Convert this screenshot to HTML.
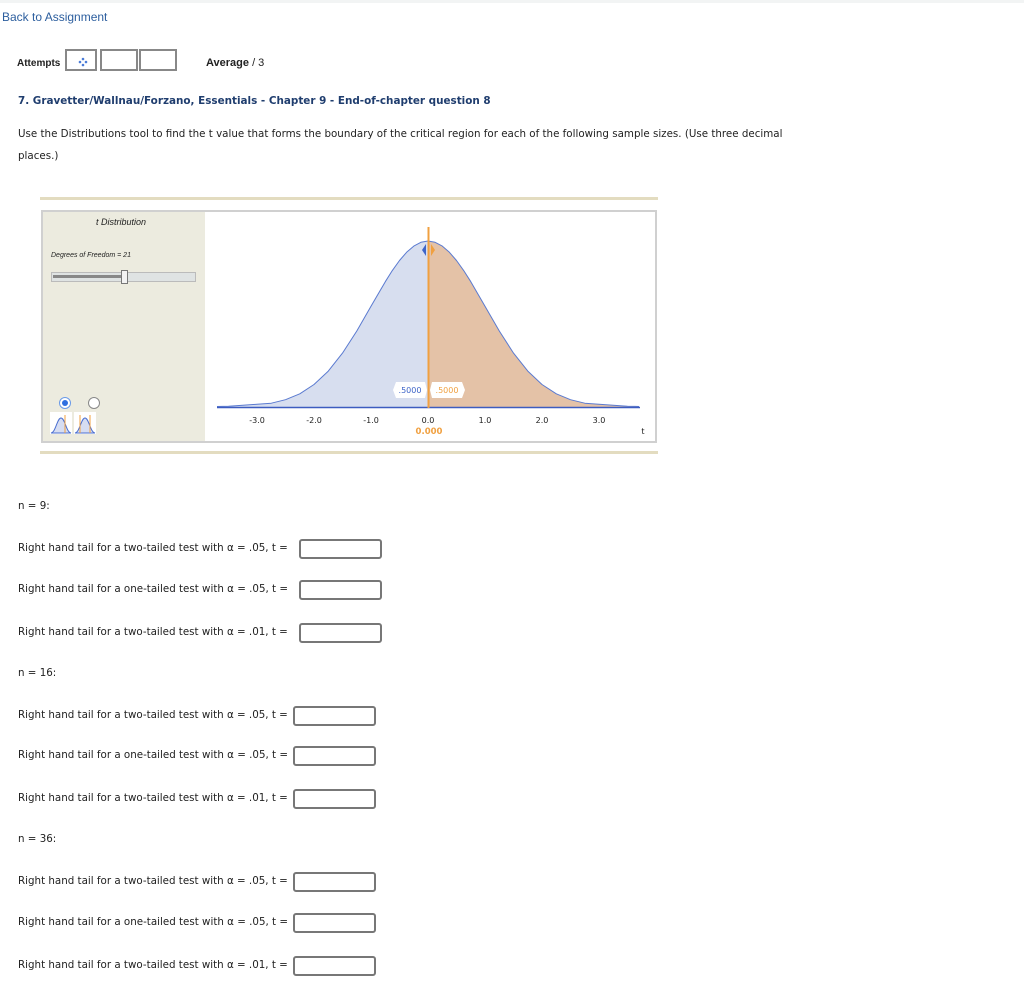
<!DOCTYPE html>
<html><head><meta charset="utf-8">
<style>
html,body{margin:0;padding:0;background:#fff;width:1024px;height:995px;overflow:hidden;position:relative;font-family:"DejaVu Sans","Liberation Sans",sans-serif;color:#222}
.a{position:absolute;white-space:nowrap}
.v{font-size:10.3px}
.inp{position:absolute;width:79px;height:16px;border:2px solid #777;border-radius:3px;background:#fff}
.lib{font-family:"Liberation Sans",sans-serif}
</style></head><body>
<div class="a" style="left:0;top:0;width:1024px;height:3px;background:#f2f4f4"></div>
<div class="a lib" style="left:2px;top:10px;font-size:12px;color:#2c5e9e">Back to Assignment</div>
<div class="a lib" style="left:17px;top:58px;font-size:10px;font-weight:bold;color:#222">Attempts</div>
<div class="a" style="left:65px;top:49px;width:32px;height:22px;border:2px solid #888;box-sizing:border-box"></div>
<div class="a" style="left:100px;top:49px;width:38px;height:22px;border:2px solid #888;box-sizing:border-box"></div>
<div class="a" style="left:139px;top:49px;width:38px;height:22px;border:2px solid #888;box-sizing:border-box"></div>
<svg class="a" style="left:78px;top:57px" width="10" height="10"><g fill="#4a7bd8"><circle cx="5" cy="2" r="1.3"/><circle cx="5" cy="8" r="1.3"/><circle cx="2" cy="5" r="1.3"/><circle cx="8" cy="5" r="1.3"/></g></svg>
<div class="a lib" style="left:206px;top:57px;font-size:11px"><b>Average</b> / 3</div>
<div class="a" style="left:18px;top:95px;font-size:10.4px;font-weight:bold;color:#1f3d6e">7. Gravetter/Wallnau/Forzano, Essentials - Chapter 9 - End-of-chapter question 8</div>
<div class="a v" style="left:18px;top:128px">Use the Distributions tool to find the t value that forms the boundary of the critical region for each of the following sample sizes. (Use three decimal</div>
<div class="a v" style="left:18px;top:150px">places.)</div>

<div class="a" style="left:40px;top:197px;width:618px;height:3px;background:#e3dcc0"></div>
<div class="a" style="left:40px;top:451px;width:618px;height:3px;background:#e3dcc0"></div>
<div class="a" style="left:41px;top:210px;width:616px;height:233px;border:2px solid #d0d0d0;box-sizing:border-box;background:#fff"></div>
<div class="a" style="left:43px;top:212px;width:162px;height:229px;background:#ecebdf"></div>
<div class="a lib" style="left:96px;top:217px;font-size:9px;font-style:italic">t Distribution</div>
<div class="a lib" style="left:51px;top:252px;font-size:7px;font-style:italic">Degrees of Freedom = 21</div>
<div class="a" style="left:51px;top:272px;width:143px;height:8px;border:1px solid #bbb;background:#dfe3e3"></div>
<div class="a" style="left:53px;top:275px;width:72px;height:3px;background:#888"></div>
<div class="a" style="left:121px;top:270px;width:5px;height:12px;border:1px solid #777;background:#f2f2f2"></div>
<div class="a" style="left:59px;top:397px;width:10px;height:10px;border-radius:50%;border:1px solid #6a9ae8;background:#fff"></div>
<div class="a" style="left:62px;top:400px;width:6px;height:6px;border-radius:50%;background:#2f6fe0"></div>
<div class="a" style="left:88px;top:397px;width:10px;height:10px;border-radius:50%;border:1px solid #888;background:#fff"></div>
<svg class="a" style="left:50px;top:412px" width="58" height="24">
<rect x="0" y="0" width="22" height="22" fill="#fff"/><rect x="24" y="0" width="22" height="22" fill="#fff"/>
<path d="M1 21 C6 20 7 6 11 6 C15 6 16 20 21 21 Z" fill="#d6ddf2" stroke="#4b6fd0"/>
<line x1="15" y1="3" x2="15" y2="21" stroke="#f0a040"/>
<path d="M25 21 C30 20 31 6 35 6 C39 6 40 20 45 21 Z" fill="#d6ddf2" stroke="#4b6fd0"/>
<line x1="30" y1="3" x2="30" y2="21" stroke="#f0a040"/><line x1="40" y1="3" x2="40" y2="21" stroke="#f0a040"/>
</svg>

<svg class="a" style="left:0;top:0" width="700" height="460">
<path d="M217 406.5 L228.5 406.2 L257 404.3 L271.3 403.2 L285.5 399.7 L299.8 393.8 L314 384.5 L328.3 371.1 L342.5 353.1 L356.8 331 L371 306.3 L385.3 281.7 L392.4 270.4 L399.5 260.5 L406.6 252.3 L413.8 246.1 L420.9 242.3 L428 241 L428 407 L217 407 Z" fill="#d7deef"/>
<path d="M428 241 L435.1 242.3 L442.3 246.1 L449.4 252.3 L456.5 260.5 L463.6 270.4 L470.8 281.7 L485 306.3 L499.3 331 L513.5 353.1 L527.8 371.1 L542 384.5 L556.3 393.8 L570.5 399.7 L584.8 403.2 L599 404.3 L627.5 406.2 L639 406.5 L639 407 L428 407 Z" fill="#e4c2a7"/>
<path d="M217 406.5 L228.5 406.2 L257 404.3 L271.3 403.2 L285.5 399.7 L299.8 393.8 L314 384.5 L328.3 371.1 L342.5 353.1 L356.8 331 L371 306.3 L385.3 281.7 L392.4 270.4 L399.5 260.5 L406.6 252.3 L413.8 246.1 L420.9 242.3 L428 241 L435.1 242.3 L442.3 246.1 L449.4 252.3 L456.5 260.5 L463.6 270.4 L470.8 281.7 L485 306.3 L499.3 331 L513.5 353.1 L527.8 371.1 L542 384.5 L556.3 393.8 L570.5 399.7 L584.8 403.2 L599 404.3 L627.5 406.2 L639 406.5" fill="none" stroke="#5a7ad0" stroke-width="1" stroke-linejoin="round"/>
<line x1="217" y1="407.5" x2="640" y2="407.5" stroke="#3d5cc0" stroke-width="1.5"/>
<line x1="428.5" y1="227" x2="428.5" y2="408" stroke="#f0a040" stroke-width="2"/>
<path d="M426 244 L422 250 L426 256 Z" fill="#3d64c8"/>
<path d="M431 244 L435 250 L431 256 Z" fill="#f0a040"/>
<path d="M396 382 L425 382 L427 390 L425 398 L396 398 L393 390 Z" fill="#fff"/>
<path d="M432 382 L462 382 L465 390 L462 398 L432 398 L430 390 Z" fill="#fff"/>
<g font-family="DejaVu Sans,sans-serif" font-size="8" text-anchor="middle">
<text x="410" y="393" fill="#3d64c8">.5000</text>
<text x="447" y="393" fill="#f0a040">.5000</text>
<text x="257" y="423" fill="#222">-3.0</text>
<text x="314" y="423" fill="#222">-2.0</text>
<text x="371" y="423" fill="#222">-1.0</text>
<text x="428" y="423" fill="#222">0.0</text>
<text x="485" y="423" fill="#222">1.0</text>
<text x="542" y="423" fill="#222">2.0</text>
<text x="599" y="423" fill="#222">3.0</text>
<text x="429" y="434" fill="#f0a040" font-weight="bold" font-size="8.5">0.000</text>
<text x="643" y="434" fill="#222">t</text>
</g>
</svg>

<div class="a v" style="left:18px;top:500px">n = 9:</div>
<div class="a v" style="left:18px;top:542px">Right hand tail for a two-tailed test with α = .05, t =</div><div class="inp" style="left:299px;top:539px"></div>
<div class="a v" style="left:18px;top:583px">Right hand tail for a one-tailed test with α = .05, t =</div><div class="inp" style="left:299px;top:580px"></div>
<div class="a v" style="left:18px;top:626px">Right hand tail for a two-tailed test with α = .01, t =</div><div class="inp" style="left:299px;top:623px"></div>

<div class="a v" style="left:18px;top:667px">n = 16:</div>
<div class="a v" style="left:18px;top:709px">Right hand tail for a two-tailed test with α = .05, t =</div><div class="inp" style="left:293px;top:706px"></div>
<div class="a v" style="left:18px;top:749px">Right hand tail for a one-tailed test with α = .05, t =</div><div class="inp" style="left:293px;top:746px"></div>
<div class="a v" style="left:18px;top:792px">Right hand tail for a two-tailed test with α = .01, t =</div><div class="inp" style="left:293px;top:789px"></div>

<div class="a v" style="left:18px;top:833px">n = 36:</div>
<div class="a v" style="left:18px;top:875px">Right hand tail for a two-tailed test with α = .05, t =</div><div class="inp" style="left:293px;top:872px"></div>
<div class="a v" style="left:18px;top:916px">Right hand tail for a one-tailed test with α = .05, t =</div><div class="inp" style="left:293px;top:913px"></div>
<div class="a v" style="left:18px;top:959px">Right hand tail for a two-tailed test with α = .01, t =</div><div class="inp" style="left:293px;top:956px"></div>
</body></html>
